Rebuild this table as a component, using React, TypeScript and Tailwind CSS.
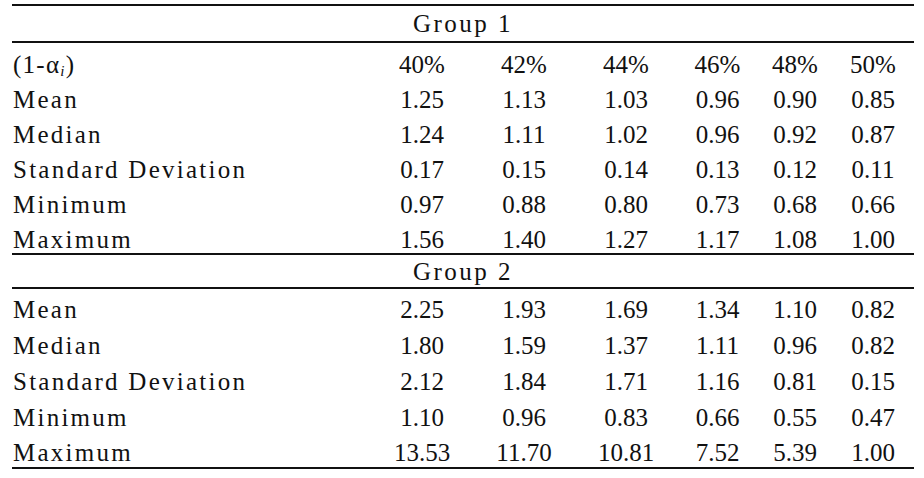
const cols = ["40%", "42%", "44%", "46%", "48%", "50%"];

const group1 = [
  { label: "Mean", values: ["1.25", "1.13", "1.03", "0.96", "0.90", "0.85"] },
  { label: "Median", values: ["1.24", "1.11", "1.02", "0.96", "0.92", "0.87"] },
  { label: "Standard Deviation", values: ["0.17", "0.15", "0.14", "0.13", "0.12", "0.11"] },
  { label: "Minimum", values: ["0.97", "0.88", "0.80", "0.73", "0.68", "0.66"] },
  { label: "Maximum", values: ["1.56", "1.40", "1.27", "1.17", "1.08", "1.00"] },
];

const group2 = [
  { label: "Mean", values: ["2.25", "1.93", "1.69", "1.34", "1.10", "0.82"] },
  { label: "Median", values: ["1.80", "1.59", "1.37", "1.11", "0.96", "0.82"] },
  { label: "Standard Deviation", values: ["2.12", "1.84", "1.71", "1.16", "0.81", "0.15"] },
  { label: "Minimum", values: ["1.10", "0.96", "0.83", "0.66", "0.55", "0.47"] },
  { label: "Maximum", values: ["13.53", "11.70", "10.81", "7.52", "5.39", "1.00"] },
];

function DataRow({ label, values, last, tall }: { label: string; values: string[]; last?: boolean; tall?: boolean }) {
  return (
    <tr className={`${tall ? "h-[36px]" : "h-[35px]"} ${last ? "border-b-2 border-[#111]" : ""}`}>
      <td className="pt-[6px] pl-[1px] text-left tracking-[0.09em]">{label}</td>
      {values.map((v, i) => (
        <td key={i} className="pt-[6px] text-center">
          {v}
        </td>
      ))}
    </tr>
  );
}

export default function App() {
  return (
    <div className="min-h-[478px] bg-white pt-[4px] pl-[12px] font-['Liberation_Serif',serif] text-[#111]">
      <table className="w-[902px] table-fixed border-collapse font-['Liberation_Serif',serif] text-[25px] leading-none">
        <colgroup>
          <col className="w-[359px]" />
          <col className="w-[102px]" />
          <col className="w-[102px]" />
          <col className="w-[102px]" />
          <col className="w-[81px]" />
          <col className="w-[74px]" />
          <col className="w-[82px]" />
        </colgroup>
        <tbody>
          <tr className="h-[37px] border-t-2 border-b-2 border-[#111]">
            <td colSpan={7} className="text-center tracking-[0.1em]">
              Group 1
            </td>
          </tr>
          <tr className="h-[37px]">
            <td className="pt-[6px] pl-[1px] text-left tracking-[0.05em]">
              (1-α<sub className="text-[15px] italic">i</sub>)
            </td>
            {cols.map((c) => (
              <td key={c} className="pt-[6px] text-center">
                {c}
              </td>
            ))}
          </tr>
          {group1.map((r, i) => (
            <DataRow key={r.label} label={r.label} values={r.values} last={i === group1.length - 1} />
          ))}
          <tr className="h-[34px] border-b-2 border-[#111]">
            <td colSpan={7} className="text-center tracking-[0.1em]">
              Group 2
            </td>
          </tr>
          {group2.map((r, i) => (
            <DataRow key={r.label} label={r.label} values={r.values} last={i === group2.length - 1} tall />
          ))}
        </tbody>
      </table>
    </div>
  );
}
